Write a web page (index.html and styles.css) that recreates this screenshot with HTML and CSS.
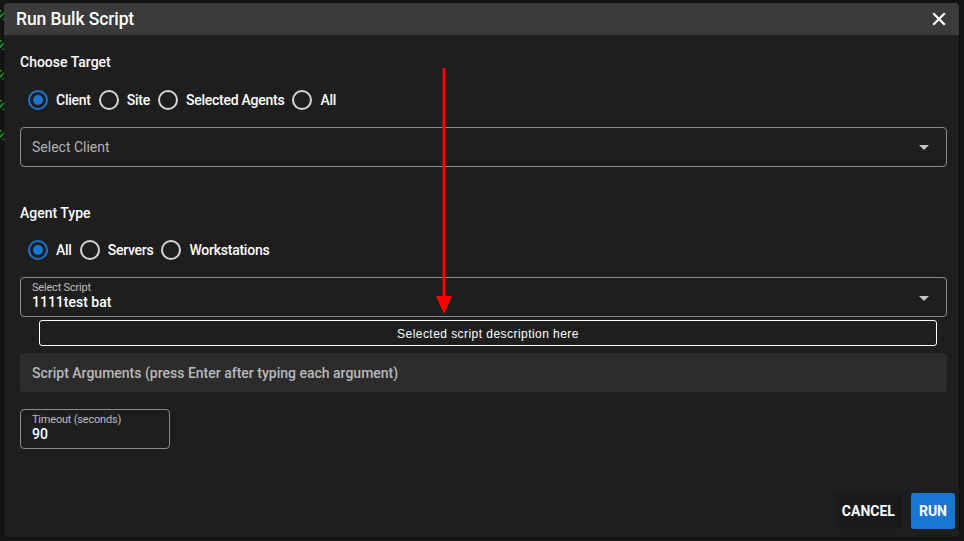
FILE: index.html
```html
<!DOCTYPE html>
<html>
<head>
<meta charset="utf-8">
<link rel="stylesheet" href="styles.css">
</head>
<body>
<div class="backdrop">
  <div class="stripe s1"></div><div class="stripe s2"></div><div class="stripe s3"></div><div class="stripe s4"></div><div class="stripe s5"></div>
</div>
<div class="dialog">
  <div class="header">
    <div class="title">Run Bulk Script</div>
    <svg class="close" width="14" height="14" viewBox="0 0 14 14"><path d="M2 2 L12 12 M12 2 L2 12" stroke="#fff" stroke-width="2.2" stroke-linecap="square"/></svg>
  </div>
  <div class="body">
    <div class="section-title first">Choose Target</div>
    <div class="radios r1">
      <div class="radio"><span class="circle checked"></span><span>Client</span></div>
      <div class="radio"><span class="circle"></span><span>Site</span></div>
      <div class="radio"><span class="circle"></span><span>Selected Agents</span></div>
      <div class="radio"><span class="circle"></span><span>All</span></div>
    </div>
    <div class="field select-client">
      <span class="placeholder">Select Client</span>
      <span class="caret"></span>
    </div>
    <div class="section-title second">Agent Type</div>
    <div class="radios r2">
      <div class="radio"><span class="circle checked"></span><span>All</span></div>
      <div class="radio"><span class="circle"></span><span>Servers</span></div>
      <div class="radio"><span class="circle"></span><span>Workstations</span></div>
    </div>
    <div class="field labeled script-field">
      <div class="stack">
        <span class="small-label">Select Script</span>
        <span class="value">1111test bat</span>
      </div>
      <span class="caret"></span>
    </div>
    <div class="desc">Selected script description here</div>
    <div class="args">Script Arguments (press Enter after typing each argument)</div>
    <div class="field labeled timeout">
      <div class="stack">
        <span class="small-label">Timeout (seconds)</span>
        <span class="value">90</span>
      </div>
    </div>
    <div class="actions">
      <button class="btn cancel">CANCEL</button>
      <button class="btn run">RUN</button>
    </div>
  </div>
  <svg class="arrow" width="24" height="250" viewBox="0 0 24 250"><line x1="12" y1="0" x2="12" y2="232" stroke="#ff0000" stroke-width="3"/><polygon points="4,228 20,228 12,246" fill="#ff0000"/></svg>
</div>
</body>
</html>
```
FILE: styles.css
```css
html, body {
  margin: 0;
  padding: 0;
  width: 964px;
  height: 541px;
  overflow: hidden;
  background: #141414;
  font-family: Roboto, "Liberation Sans", sans-serif;
}
.backdrop {
  position: absolute;
  left: 0;
  top: 0;
  width: 964px;
  height: 541px;
  background: #161616;
}
.stripe {
  position: absolute;
  left: 0;
  width: 4px;
  height: 10px;
  background: repeating-linear-gradient(135deg, #1f8a2a 0 2px, #161616 2px 4px);
}
.s1 { top: 10px; }
.s2 { top: 40px; }
.s3 { top: 70px; }
.s4 { top: 100px; }
.s5 { top: 130px; }
.dialog {
  position: absolute;
  left: 4px;
  top: 3px;
  width: 955px;
  height: 534px;
  background: #1e1e1e;
  border-radius: 4px;
  overflow: hidden;
  box-shadow: 0 0 4px rgba(0,0,0,0.6);
}
.header {
  height: 32px;
  background: #3b3b3b;
  display: flex;
  align-items: center;
  justify-content: space-between;
  padding: 0 13px 0 12px;
}
.title {
  color: #fff;
  font-size: 17.5px;
  font-weight: 500;
  letter-spacing: -0.1px;
}
.close { display: block; }
.body {
  padding: 0 12px 0 16px;
  display: flex;
  flex-direction: column;
  color: #fff;
  font-size: 14px;
}
.section-title {
  font-size: 14px;
  font-weight: 500;
  height: 20px;
  line-height: 20px;
}
.section-title.first { margin-top: 17px; }
.section-title.second { margin-top: 36px; }
.radios {
  display: flex;
  align-items: center;
  height: 24px;
  padding-left: 8px;
}
.r1 { margin-top: 16px; }
.r2 { margin-top: 15px; }
.radio {
  display: flex;
  align-items: center;
  gap: 8px;
  margin-right: 8px;
  font-size: 14px;
  font-weight: 500;
  letter-spacing: -0.25px;
}
.circle {
  box-sizing: border-box;
  width: 20px;
  height: 20px;
  border-radius: 50%;
  border: 2px solid #d6d6d6;
  display: flex;
  align-items: center;
  justify-content: center;
}
.circle.checked { border-color: #1976d2; }
.circle.checked::after {
  content: "";
  width: 10px;
  height: 10px;
  border-radius: 50%;
  background: #1976d2;
}
.field {
  box-sizing: border-box;
  height: 40px;
  border: 1px solid #8c8c8c;
  border-radius: 4px;
  display: flex;
  align-items: center;
  justify-content: space-between;
  padding: 0 17px 0 11px;
}
.select-client { margin-top: 15px; }
.placeholder {
  color: #b3b3b3;
  font-size: 14px;
}
.caret {
  width: 0;
  height: 0;
  border-left: 5px solid transparent;
  border-right: 5px solid transparent;
  border-top: 5px solid #c4c4c4;
}
.stack {
  display: flex;
  flex-direction: column;
}
.small-label {
  font-size: 11px;
  color: #bdbdbd;
  line-height: 12px;
  letter-spacing: -0.2px;
}
.value {
  font-size: 14px;
  font-weight: 500;
  color: #fff;
  line-height: 16px;
}
.labeled { align-items: flex-start; padding-top: 4px; }
.labeled .caret { margin-top: 14px; }
.script-field { margin-top: 15px; }
.desc {
  box-sizing: border-box;
  margin: 3px 10px 0 19px;
  height: 26px;
  border: 1px solid #ffffff;
  border-radius: 3px;
  display: flex;
  align-items: center;
  justify-content: center;
  padding-top: 1px;
  font-family: "Liberation Sans", Arial, sans-serif;
  font-size: 12px;
  letter-spacing: 0.45px;
  color: #fff;
}
.args {
  margin-top: 7px;
  height: 39px;
  background: #2c2c2c;
  border-radius: 2px;
  display: flex;
  align-items: center;
  padding-left: 12px;
  color: #b9b9b9;
  font-size: 14px;
  font-weight: 500;
}
.timeout {
  width: 150px;
  margin-top: 17px;
}
.actions {
  display: flex;
  justify-content: flex-end;
  gap: 9px;
  margin-top: 44px;
  margin-right: -8px;
}
.btn {
  border: none;
  height: 36px;
  border-radius: 3px;
  font-family: Roboto, "Liberation Sans", sans-serif;
  font-size: 14px;
  font-weight: 700;
  color: #fff;
  padding: 0 7px;
}
.cancel { background: #1a1a1a; }
.run { background: #1976d2; padding: 0 8px; }
.arrow {
  position: absolute;
  left: 428px;
  top: 65px;
}
```
